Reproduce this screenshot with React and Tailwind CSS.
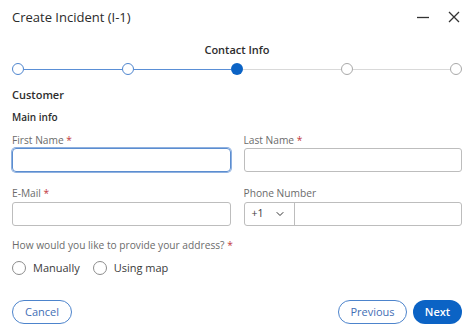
import { ChevronDown } from "lucide-react";

const Step = ({ state }) => {
    if (state === "active") {
        return <div className="w-3 h-3 rounded-full bg-[#0b63c5] shrink-0" />;
    }
    if (state === "done") {
        return <div className="w-3 h-3 rounded-full border border-[#4f86cf] bg-white shrink-0" />;
    }
    return <div className="w-3 h-3 rounded-full border border-[#a9a9a9] bg-white shrink-0" />;
};

const Label = ({ children, required }) => (
    <div className="text-[10.2px] leading-4 text-[#6b6b6b]">
        {children}
        {required && <span className="text-[#c2373c]"> *</span>}
    </div>
);

const Radio = ({ label }) => (
    <label className="flex items-center gap-[7px]">
        <span className="w-[14px] h-[14px] rounded-full border border-[#8c8c8c] bg-white" />
        <span className="text-[11px] leading-4 text-[#3a3a3a]">{label}</span>
    </label>
);

export default function App() {
    return (
        <div
            className="w-[474px] h-[336px] bg-white px-3 text-[#2d2d2d]"
            style={{ fontFamily: '"Open Sans", "Noto Sans", sans-serif' }}
        >
            {/* Header */}
            <div className="h-[34px] flex items-center justify-between">
                <h1 className="text-[13px] leading-5 font-medium text-[#2b2b2b]">Create Incident (I-1)</h1>
                <div className="flex items-center gap-[19px] pr-[2px]">
                    <svg width="12" height="12" viewBox="0 0 12 12">
                        <path d="M0 6.5H12" stroke="#333" strokeWidth="1.3" />
                    </svg>
                    <svg width="12" height="12" viewBox="0 0 12 12">
                        <path d="M1 1L11 11M11 1L1 11" stroke="#333" strokeWidth="1.3" />
                    </svg>
                </div>
            </div>

            {/* Stepper */}
            <div className="mt-2 text-center text-[11px] leading-4 font-semibold text-[#2d2d2d]">
                Contact Info
            </div>
            <div className="mt-[5px] flex items-center">
                <Step state="done" />
                <div className="flex-1 h-px bg-[#5a8fd6]" />
                <Step state="done" />
                <div className="flex-1 h-px bg-[#5a8fd6]" />
                <Step state="active" />
                <div className="flex-1 h-px bg-[#d9d9d9]" />
                <Step />
                <div className="flex-1 h-px bg-[#d9d9d9]" />
                <Step />
            </div>

            <div className="mt-3 text-[11px] leading-4 font-semibold text-[#2d2d2d]">Customer</div>
            <div className="mt-1.5 text-[10px] leading-4 font-semibold text-[#2d2d2d]">Main info</div>

            {/* Fields */}
            <div className="mt-[7px] grid grid-cols-2 gap-x-[13px]">
                <div>
                    <Label required>First Name</Label>
                    <input className="block w-full h-6 rounded-[4px] border border-[#5b8dd0] shadow-[0_0_0_1px_#8fb1e0] outline-none" />
                </div>
                <div>
                    <Label required>Last Name</Label>
                    <input className="block w-full h-6 rounded-[3px] border border-[#bdbdbd] outline-none" />
                </div>
                <div className="mt-[13px]">
                    <Label required>E-Mail</Label>
                    <input className="mt-px block w-full h-6 rounded-[3px] border border-[#bdbdbd] outline-none" />
                </div>
                <div className="mt-[13px]">
                    <Label>Phone Number</Label>
                    <div className="mt-px flex h-6 rounded-[3px] border border-[#bdbdbd]">
                        <div className="w-[50px] flex items-center justify-between pl-[7px] pr-[8px] border-r border-[#bdbdbd]">
                            <span className="text-[10.5px] text-[#3a3a3a]">+1</span>
                            <ChevronDown className="w-3 h-3 text-[#333]" strokeWidth={2} />
                        </div>
                        <input className="flex-1 min-w-0 outline-none" />
                    </div>
                </div>
            </div>

            <div className="mt-[11px]">
                <Label required>How would you like to provide your address?</Label>
            </div>
            <div className="mt-[7px] flex items-center gap-[13px]">
                <Radio label="Manually" />
                <Radio label="Using map" />
            </div>

            {/* Footer */}
            <div className="mt-6 flex items-center justify-between">
                <button className="h-6 w-[60px] rounded-full border border-[#4d84cc] text-[11px] text-[#3f6eb5]">
                    Cancel
                </button>
                <div className="flex items-center gap-1.5">
                    <button className="h-6 w-[69px] rounded-full border border-[#4d84cc] text-[11px] text-[#3f6eb5]">
                        Previous
                    </button>
                    <button className="h-6 w-[49px] rounded-full bg-[#0b63c5] text-[11px] font-semibold text-white">
                        Next
                    </button>
                </div>
            </div>
        </div>
    );
}
